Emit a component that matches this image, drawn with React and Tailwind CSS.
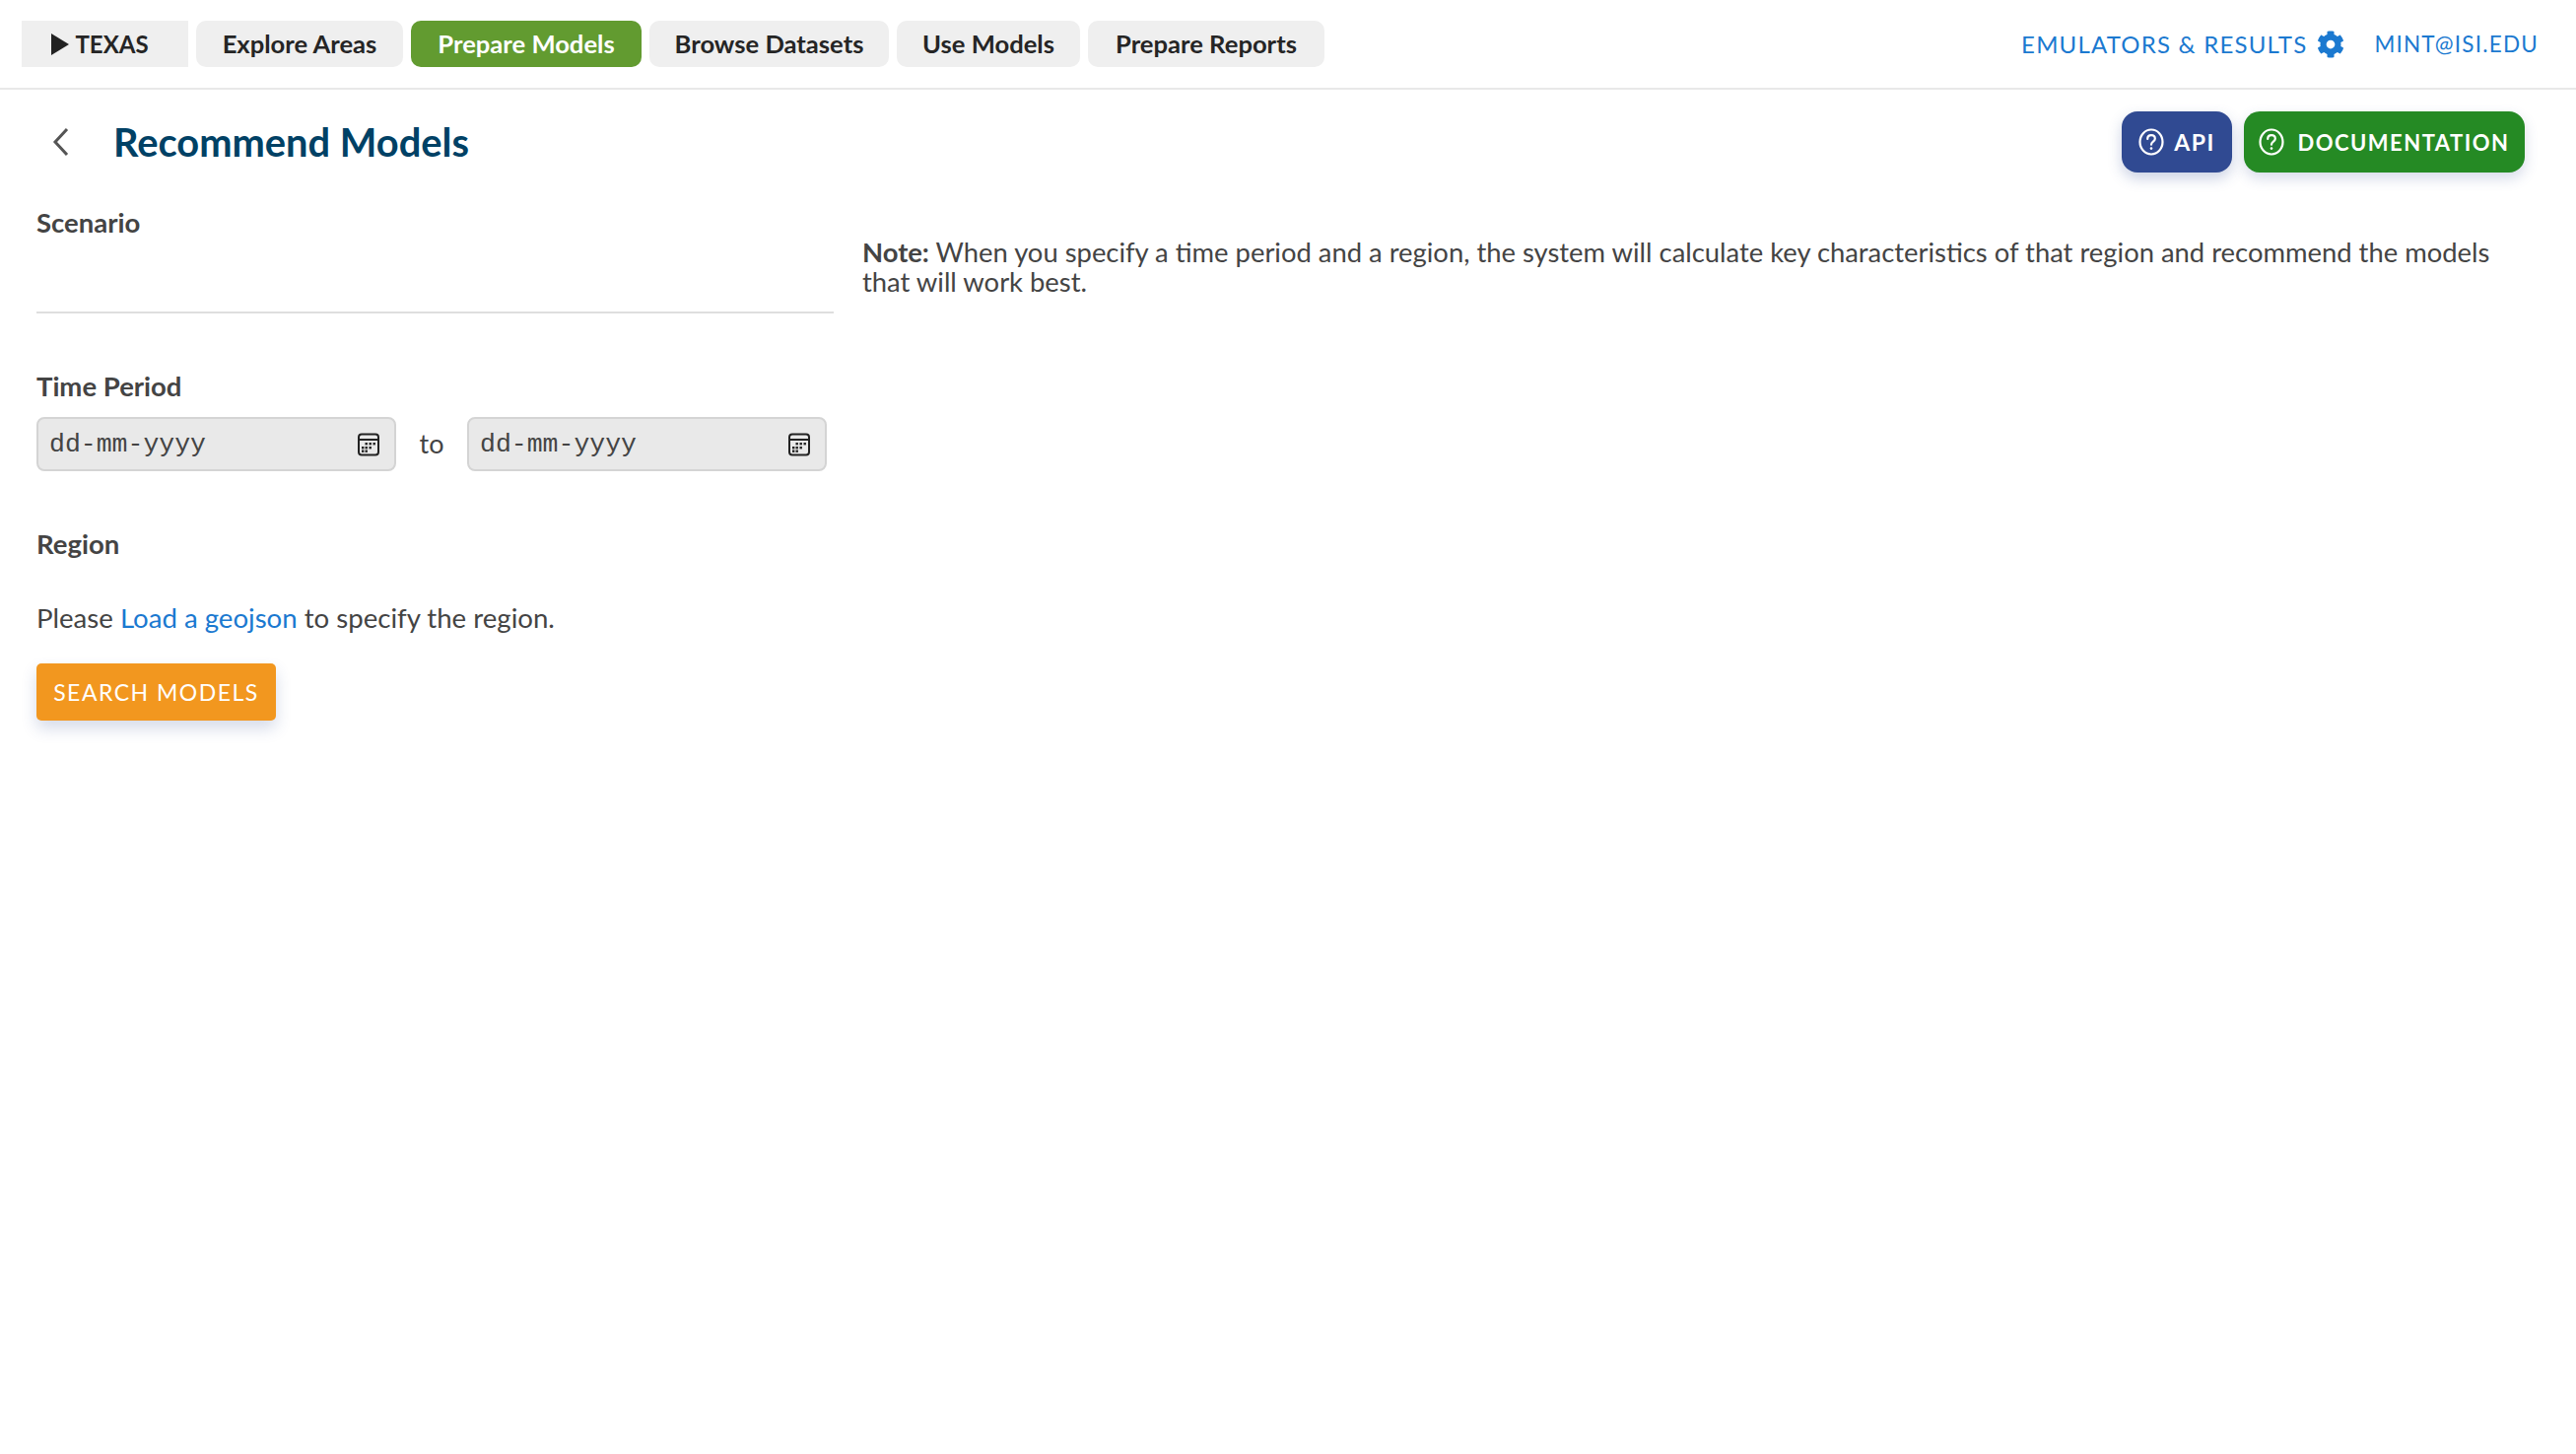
import React from "react";

const Help = () => (
  <svg width="26" height="28" viewBox="0 0 26 28" fill="none" stroke="white" strokeWidth="2.2" className="shrink-0">
    <ellipse cx="13" cy="14" rx="11.5" ry="12.5" />
    <path d="M9.2 11c0-2.4 1.7-3.8 3.8-3.8s3.8 1.4 3.8 3.5c0 3-3.8 3-3.8 6" strokeLinecap="round" />
    <circle cx="13" cy="20.6" r="1.3" fill="white" stroke="none" />
  </svg>
);

const Calendar = () => (
  <svg width="24" height="24" viewBox="0 0 24 24" fill="none" className="shrink-0">
    <rect x="2" y="1.5" width="20" height="21" rx="3" stroke="#222" strokeWidth="2" />
    <path d="M2 7h20" stroke="#222" strokeWidth="2" />
    <g fill="#222">
      <rect x="8.5" y="10" width="2.4" height="2.4" /><rect x="12.5" y="10" width="2.4" height="2.4" /><rect x="16.5" y="10" width="2.4" height="2.4" />
      <rect x="5" y="14" width="2.4" height="2.4" /><rect x="8.5" y="14" width="2.4" height="2.4" /><rect x="12.5" y="14" width="2.4" height="2.4" />
      <rect x="5" y="17.5" width="2.4" height="2.4" /><rect x="8.5" y="17.5" width="2.4" height="2.4" />
    </g>
  </svg>
);

const Gear = () => (
  <svg width="28" height="30" viewBox="0 0 512 512" fill="#1b79d0" className="shrink-0">
    <path d="M487.4 315.7l-42.6-24.6c4.3-23.2 4.3-47 0-70.2l42.6-24.6c4.9-2.8 7.1-8.6 5.5-14-11.1-35.6-30-67.8-54.7-94.6-3.8-4.1-10-5.1-14.8-2.3L380.8 110c-17.9-15.4-38.5-27.3-60.8-35.1V25.8c0-5.6-3.9-10.5-9.4-11.7-36.7-8.2-74.3-7.8-109.2 0-5.5 1.2-9.4 6.1-9.4 11.7V75c-22.2 7.9-42.8 19.8-60.8 35.1L88.7 85.5c-4.9-2.8-11-1.9-14.8 2.3-24.7 26.7-43.6 58.9-54.7 94.6-1.7 5.4.6 11.2 5.5 14L67.3 221c-4.3 23.2-4.3 47 0 70.2l-42.6 24.6c-4.9 2.8-7.1 8.6-5.5 14 11.1 35.6 30 67.8 54.7 94.6 3.8 4.1 10 5.1 14.8 2.3l42.6-24.6c17.9 15.4 38.5 27.3 60.8 35.1v49.2c0 5.6 3.9 10.5 9.4 11.7 36.7 8.2 74.3 7.8 109.2 0 5.5-1.2 9.4-6.1 9.4-11.7v-49.2c22.2-7.9 42.8-19.8 60.8-35.1l42.6 24.6c4.9 2.8 11 1.9 14.8-2.3 24.7-26.7 43.6-58.9 54.7-94.6 1.5-5.5-.7-11.3-5.6-14.1zM256 336c-44.1 0-80-35.9-80-80s35.9-80 80-80 80 35.9 80 80-35.9 80-80 80z" />
  </svg>
);

const Tab = ({ w, active, children }) => (
  <div className={active
    ? "h-[47px] rounded-[10px] bg-[#629b30] text-white flex items-center justify-center text-[25.6px] font-bold " + w
    : "h-[47px] rounded-[10px] bg-[#efefef] text-[#252525] flex items-center justify-center text-[25.6px] font-bold " + w}>
    {children}
  </div>
);

const DateField = () => (
  <div className="w-[365px] h-[55px] rounded-[8px] border-2 border-[#d4d4d4] bg-[#e9e9e9] flex items-center justify-between pl-[11px] pr-[14px]">
    <span className="font-['Liberation_Mono',monospace] text-[26.5px] text-[#444] pt-[2px]">dd-mm-yyyy</span>
    <Calendar />
  </div>
);

export default function App() {
  return (
    <div className="min-h-[1475px] bg-white font-['Lato',sans-serif] text-[#444]">
      <header className="h-[91px] border-b-2 border-[#e8e8e8] flex items-center justify-between pl-[22px] pr-[38px]">
        <nav className="flex gap-[8px]">
          <div className="h-[47px] w-[169px] pr-[10px] bg-[#efefef] text-[#252525] flex items-center justify-center gap-[6px] text-[24px] font-bold">
            <svg width="18" height="22" viewBox="0 0 18 22" fill="#222"><path d="M0 0l18 11L0 22z" /></svg>
            <span>TEXAS</span>
          </div>
          <Tab w="w-[210px]">Explore Areas</Tab>
          <Tab w="w-[234px]" active>Prepare Models</Tab>
          <Tab w="w-[243px]">Browse Datasets</Tab>
          <Tab w="w-[186px]">Use Models</Tab>
          <Tab w="w-[240px]">Prepare Reports</Tab>
        </nav>
        <div className="flex items-center text-[#1b79d0] text-[24px] tracking-[1.2px]">
          <span>EMULATORS &amp; RESULTS</span>
          <span className="ml-[10px]"><Gear /></span>
          <span className="ml-[30px] text-[22.5px]">MINT@ISI.EDU</span>
        </div>
      </header>

      <div className="flex items-center justify-between h-[106px] pl-[52px] pr-[52px]">
        <div className="flex items-center">
          <svg width="20" height="30" viewBox="0 0 20 30" fill="none" stroke="#555" strokeWidth="3"><path d="M16 2L4 15l12 13" /></svg>
          <h1 className="ml-[43px] text-[39.8px] font-bold text-[#004165]">Recommend Models</h1>
        </div>
        <div className="flex gap-[12px]">
          <div className="h-[62px] w-[112px] rounded-[16px] bg-[#304a92] text-white flex items-center justify-center gap-[10px] text-[23px] font-bold tracking-[1.5px] shadow-[0_6px_14px_rgba(48,74,146,0.25)]">
            <Help /><span>API</span>
          </div>
          <div className="h-[62px] w-[285px] rounded-[16px] bg-[#258a24] text-white flex items-center justify-center gap-[13px] text-[22px] font-bold tracking-[1.5px] shadow-[0_6px_14px_rgba(48,74,146,0.2)]">
            <Help /><span>DOCUMENTATION</span>
          </div>
        </div>
      </div>

      <main className="flex pl-[37px] pr-[60px]">
        <section className="w-[809px] shrink-0">
          <div className="text-[27.5px] font-bold leading-[32px] pt-[13px]">Scenario</div>
          <div className="h-[76px] border-b-2 border-[#dedede]"></div>
          <div className="text-[27.5px] font-bold leading-[32px] mt-[58px]">Time Period</div>
          <div className="flex items-center mt-[15px]">
            <DateField />
            <span className="w-[72px] text-center text-[27px]">to</span>
            <DateField />
          </div>
          <div className="text-[27.5px] font-bold leading-[32px] mt-[58px]">Region</div>
          <p className="text-[27.6px] leading-[32px] mt-[43px]">
            Please <span className="text-[#1b79d0]">Load a geojson</span> to specify the region.
          </p>
          <div className="mt-[30px] h-[58px] w-[243px] rounded-[5px] bg-[#f2971f] text-white flex items-center justify-center text-[23px] tracking-[1.5px] shadow-[0_8px_16px_rgba(48,74,146,0.2)]">
            SEARCH MODELS
          </div>
        </section>
        <section className="ml-[29px] pt-[44px] text-[27.4px] leading-[30px] max-w-[1670px]">
          <b>Note:</b> When you specify a time period and a region, the system will calculate key characteristics of that region and recommend the models that will work best.
        </section>
      </main>
    </div>
  );
}
